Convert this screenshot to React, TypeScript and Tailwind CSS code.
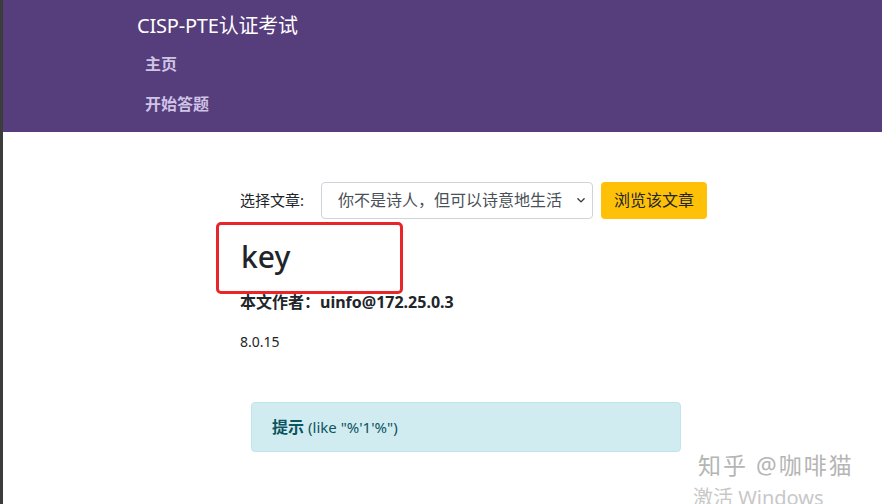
import React from "react";

export default function App() {
  const font = { fontFamily: '"Noto Sans", "Noto Sans CJK SC", sans-serif' };
  return (
    <div className="w-[882px] h-[504px] overflow-hidden flex bg-white" style={font}>
      <div className="w-[3px] h-full bg-[#3c3c3c] shrink-0" />
      <div className="flex-1 flex flex-col relative">
        <div className="h-[132px] bg-[#563d7c] flex flex-col pl-[134px]">
          <div className="text-white text-[20px] leading-none mt-[16px] tracking-[-0.2px]">CISP-PTE认证考试</div>
          <div className="pl-[8px] mt-[20px] text-[#cfc3e6] text-[16px] font-bold leading-none">主页</div>
          <div className="pl-[8px] mt-[24px] text-[#cfc3e6] text-[16px] font-bold leading-none">开始答题</div>
        </div>
        <div className="flex flex-col pl-[237px] pt-[49px]">
          <div className="flex items-center h-[38px]">
            <span className="text-[15px] text-[#212529] w-[81px]">选择文章:</span>
            <div className="w-[272px] h-[37px] border border-[#ced4da] rounded-[4px] flex items-center justify-between pl-[16px] pr-[6px]">
              <span className="text-[16px] text-[#495057]">你不是诗人，但可以诗意地生活</span>
              <svg width="10" height="10" viewBox="0 0 16 16">
                <path d="M3 6l5 5 5-5" fill="none" stroke="#343a40" strokeWidth="2.2" strokeLinecap="round" strokeLinejoin="round" />
              </svg>
            </div>
            <div className="ml-[8px] w-[106px] h-[37px] bg-[#ffc107] rounded-[4px] flex items-center justify-center text-[16px] text-[#212529]">浏览该文章</div>
          </div>
          <div className="ml-[-24px] mt-[3px] w-[187px] h-[72px] border-[3px] border-[#e8262a] rounded-[5px] flex items-center pl-[22px]">
            <span className="text-[30px] font-medium text-[#212529] leading-none mt-[-2px]">key</span>
          </div>
          <div className="mt-[-2px] text-[16px] font-bold text-[#212529] leading-[20px]">本文作者：uinfo@172.25.0.3</div>
          <div className="mt-[20px] text-[14px] text-[#212529] leading-[20px]">8.0.15</div>
          <div className="ml-[11px] mt-[50px] w-[430px] h-[50px] bg-[#d1ecf1] border border-[#bee5eb] rounded-[4px] flex items-center pl-[20px] text-[#0c5460]">
            <span className="text-[16px] font-bold">提示</span>
            <span className="text-[15px] ml-[4px]">(like "%'1'%")</span>
          </div>
        </div>
        <div className="absolute left-[695px] top-[454px] text-[23px] text-[#b5b5b5] leading-none tracking-[2px]">知乎 @咖啡猫</div>
        <div className="absolute left-[690px] top-[488px] text-[20px] text-[#c8c8c8] leading-none">激活 Windows</div>
      </div>
    </div>
  );
}
